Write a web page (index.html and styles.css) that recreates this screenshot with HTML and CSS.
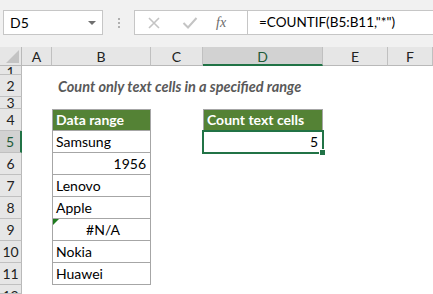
FILE: index.html
```html
<html>
<head>
  <title>COUNTIF text cells</title>
  <link rel="stylesheet" href="styles.css">
</head>
<body>
  <div class="formula-bar">
    <div class="name-box">
      <span>D5</span>
      <span class="drop"></span>
    </div>
    <div class="grip"><i></i><i></i><i></i></div>
    <div class="actions">
      <svg class="icon" width="14" height="14" viewBox="0 0 14 14"><path d="M2 2 L12 12 M12 2 L2 12" stroke="#c4c4c4" stroke-width="1.6" fill="none"/></svg>
      <svg class="icon" width="16" height="14" viewBox="0 0 16 14"><path d="M1.5 7 L6 11.5 L14.5 2" stroke="#c4c4c4" stroke-width="2" fill="none"/></svg>
      <span class="fx">fx</span>
    </div>
    <div class="formula">=COUNTIF(B5:B11,"*")</div>
  </div>

  <div class="sheet">
    <!-- column headers -->
    <div class="corner"><span class="tri"></span></div>
    <div class="col-head">A</div>
    <div class="col-head">B</div>
    <div class="col-head">C</div>
    <div class="col-head active">D</div>
    <div class="col-head">E</div>
    <div class="col-head">F</div>

    <!-- row 1 -->
    <div class="row-head short">1</div>
    <div class="cell"></div><div class="cell"></div><div class="cell"></div><div class="cell"></div><div class="cell"></div><div class="cell"></div>

    <!-- row 2 -->
    <div class="row-head">2</div>
    <div class="cell"></div>
    <div class="cell title">Count only text cells in a specified range</div>
    <div class="cell"></div><div class="cell"></div><div class="cell"></div><div class="cell"></div>

    <!-- row 3 -->
    <div class="row-head short">3</div>
    <div class="cell"></div><div class="cell"></div><div class="cell"></div><div class="cell"></div><div class="cell"></div><div class="cell"></div>

    <!-- row 4 -->
    <div class="row-head">4</div>
    <div class="cell"></div>
    <div class="cell head">Data range</div>
    <div class="cell"></div>
    <div class="cell head">Count text cells</div>
    <div class="cell"></div><div class="cell"></div>

    <!-- row 5 -->
    <div class="row-head active">5</div>
    <div class="cell"></div>
    <div class="cell data">Samsung</div>
    <div class="cell"></div>
    <div class="cell selected num">5<span class="handle"></span></div>
    <div class="cell"></div><div class="cell"></div>

    <div class="row-head">6</div>
    <div class="cell"></div>
    <div class="cell data num">1956</div>
    <div class="cell"></div><div class="cell"></div><div class="cell"></div><div class="cell"></div>

    <div class="row-head">7</div>
    <div class="cell"></div>
    <div class="cell data">Lenovo</div>
    <div class="cell"></div><div class="cell"></div><div class="cell"></div><div class="cell"></div>

    <div class="row-head">8</div>
    <div class="cell"></div>
    <div class="cell data">Apple</div>
    <div class="cell"></div><div class="cell"></div><div class="cell"></div><div class="cell"></div>

    <div class="row-head">9</div>
    <div class="cell"></div>
    <div class="cell data center">#N/A<span class="err"></span></div>
    <div class="cell"></div><div class="cell"></div><div class="cell"></div><div class="cell"></div>

    <div class="row-head">10</div>
    <div class="cell"></div>
    <div class="cell data">Nokia</div>
    <div class="cell"></div><div class="cell"></div><div class="cell"></div><div class="cell"></div>

    <div class="row-head">11</div>
    <div class="cell"></div>
    <div class="cell data">Huawei</div>
    <div class="cell"></div><div class="cell"></div><div class="cell"></div><div class="cell"></div>

    <div class="row-head">12</div>
    <div class="cell"></div><div class="cell"></div><div class="cell"></div><div class="cell"></div><div class="cell"></div><div class="cell"></div>
  </div>
</body>
</html>
```

FILE: styles.css
```css
body {
  margin: 0;
  width: 433px;
  height: 294px;
  overflow: hidden;
  background-color: #ffffff;
  font-family: Lato, 'Liberation Sans', sans-serif;
  color: #000000;
}

/* formula bar */
.formula-bar {
  height: 47px;
  background-color: #f1f1f1;
  display: flex;
  align-items: flex-start;
  padding-top: 10px;
  box-sizing: border-box;
}

.name-box {
  margin-left: 3px;
  width: 100px;
  height: 25px;
  box-sizing: border-box;
  background-color: #ffffff;
  border: 1px solid #c6c6c6;
  display: flex;
  align-items: center;
  justify-content: space-between;
  padding: 0 6px 0 6px;
  font-size: 14px;
}

.drop {
  width: 0;
  height: 0;
  border-left: 4px solid transparent;
  border-right: 4px solid transparent;
  border-top: 4px solid #6f6f6f;
}

.grip {
  width: 31px;
  height: 25px;
  display: flex;
  flex-direction: column;
  align-items: center;
  justify-content: center;
  gap: 2px;
}

.grip i {
  width: 2px;
  height: 2px;
  background-color: #b0b0b0;
}

.actions {
  width: 113px;
  height: 25px;
  box-sizing: border-box;
  background-color: #ffffff;
  border: 1px solid #c6c6c6;
  border-right: none;
  display: flex;
  align-items: center;
  padding-left: 12px;
  gap: 21px;
}

.fx {
  font-family: 'Liberation Serif', serif;
  font-style: italic;
  font-size: 14px;
  color: #6a6a6a;
  margin-left: -3px;
}

.formula {
  flex: 1;
  height: 25px;
  box-sizing: border-box;
  background-color: #ffffff;
  border: 1px solid #c6c6c6;
  border-right: none;
  padding-left: 11px;
  font-size: 13.5px;
  line-height: 23px;
}

/* sheet grid */
.sheet {
  display: grid;
  grid-template-columns: 22px 30px 99px 52px 120px 65px 1fr;
  grid-template-rows: 19px 9px 22px 12px repeat(8, 22px) 1fr;
  height: 247px;
}

.corner {
  background-color: #e6e6e6;
  border-right: 1px solid #b9b9b9;
  border-bottom: 1px solid #b9b9b9;
  box-sizing: border-box;
  position: relative;
}

.tri {
  position: absolute;
  right: 2px;
  bottom: 2px;
  width: 0;
  height: 0;
  border-left: 13px solid transparent;
  border-bottom: 13px solid #c3c3c3;
}

.col-head {
  background-color: #e6e6e6;
  border-right: 1px solid #c0c0c0;
  border-bottom: 1px solid #b9b9b9;
  box-sizing: border-box;
  text-align: center;
  font-size: 14px;
  line-height: 19px;
  color: #222222;
}

.col-head.active {
  background-color: #d2d2d2;
  border-bottom: 2px solid #217346;
  color: #1e5b38;
}

.row-head {
  background-color: #e6e6e6;
  border-right: 1px solid #b9b9b9;
  border-bottom: 1px solid #c0c0c0;
  box-sizing: border-box;
  text-align: center;
  font-size: 14px;
  line-height: 22px;
  color: #222222;
  overflow: hidden;
}

.row-head.short {
  line-height: 12px;
}

.row-head.active {
  background-color: #d2d2d2;
  border-right: 2px solid #217346;
  color: #1e5b38;
}

.cell {
  font-size: 14px;
  line-height: 22px;
  white-space: nowrap;
  min-width: 0;
  position: relative;
}

.title {
  font-size: 14.5px;
  font-weight: bold;
  font-style: italic;
  color: #595959;
  padding-left: 6px;
  line-height: 24px;
  overflow: visible;
  z-index: 1;
}

.head {
  background-color: #548235;
  color: #ffffff;
  font-weight: bold;
  padding-left: 3px;
  border: 1px solid #a6a6a6;
  box-sizing: border-box;
  line-height: 20px;
}

.data {
  border: 1px solid #a6a6a6;
  border-top: none;
  box-sizing: border-box;
  padding-left: 3px;
  line-height: 22px;
}

.num {
  text-align: right;
  padding-right: 4px;
}

.center {
  text-align: center;
}

.err {
  position: absolute;
  left: 0;
  top: 0;
  width: 0;
  height: 0;
  border-top: 6px solid #1e7b1e;
  border-right: 6px solid transparent;
}

.selected {
  border: 2px solid #217346;
  margin: -1px;
  line-height: 20px;
  box-sizing: border-box;
}

.handle {
  position: absolute;
  right: -4px;
  bottom: -4px;
  width: 5px;
  height: 5px;
  background-color: #217346;
  border: 1px solid #ffffff;
}
```
